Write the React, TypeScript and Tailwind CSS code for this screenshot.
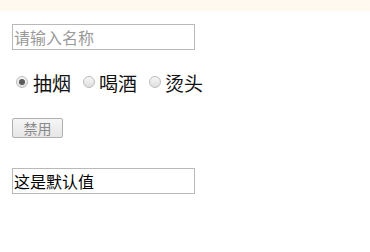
import React from "react";

const font = { fontFamily: '"Noto Sans CJK SC", "Liberation Sans", sans-serif' };

function Radio({ checked }: { checked?: boolean }) {
  return (
    <span className="inline-flex h-[12px] w-[12px] items-center justify-center rounded-full border border-[#bdbdbd] bg-gradient-to-b from-[#f7f7f7] to-[#dedede]">
      {checked && <span className="h-[6px] w-[6px] rounded-full bg-[#5a5a5a]" />}
    </span>
  );
}

export default function App() {
  return (
    <div className="min-h-[252px] w-[370px] bg-white" style={font}>
      <div className="h-[11px] bg-[#fff9ef]" />
      <div className="flex flex-col items-start pl-3">
        <div className="mt-[13px] flex h-[26px] w-[183px] items-center border border-[#b9b9b9] px-[1px] text-[16px] leading-none text-[#9a9a9a]">
          请输入名称
        </div>
        <div className="mt-[19px] flex h-[26px] items-center text-[19px] leading-none text-[#111]">
          <span className="ml-1 flex"><Radio checked /></span>
          <span className="ml-[5px]">抽烟</span>
          <span className="ml-[12px] flex"><Radio /></span>
          <span className="ml-[4px]">喝酒</span>
          <span className="ml-[12px] flex"><Radio /></span>
          <span className="ml-[4px]">烫头</span>
        </div>
        <button className="mt-[23px] box-border flex h-[20px] w-[51px] items-center justify-center rounded-[2px] border border-[#b0b0b0] bg-gradient-to-b from-[#f6f6f6] to-[#e6e6e6] p-0 text-[14px] leading-none text-[#8a8a8a]">
          禁用
        </button>
        <div className="mt-[30px] flex h-[26px] w-[183px] items-center border border-[#b9b9b9] px-[1px] text-[16px] leading-none text-black">
          这是默认值
        </div>
      </div>
    </div>
  );
}
